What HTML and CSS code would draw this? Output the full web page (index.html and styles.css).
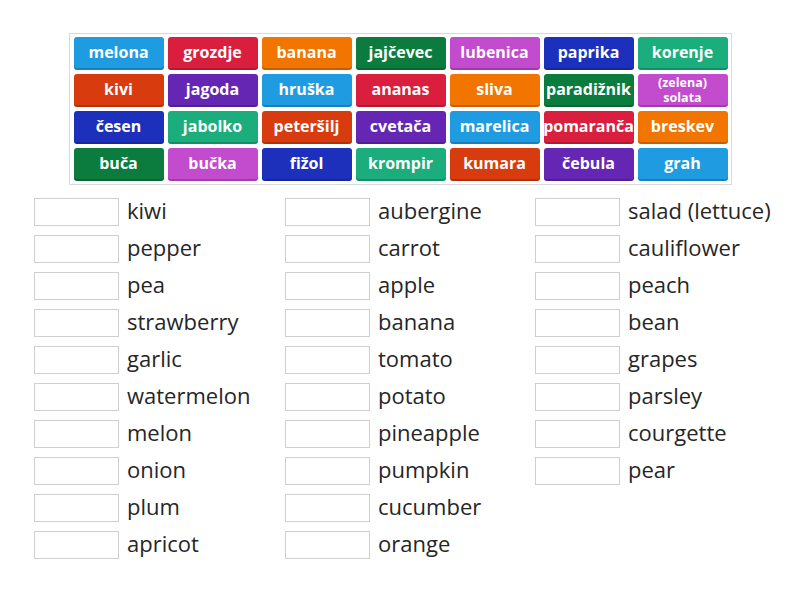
FILE: index.html
```html
<!DOCTYPE html>
<html lang="sl">
<head>
<meta charset="utf-8">
<title>Vegetables and fruit</title>
<link rel="stylesheet" href="styles.css">
</head>
<body>
<div class="page">
  <div class="bank">
    <div class="tile blue">melona</div>
    <div class="tile red">grozdje</div>
    <div class="tile orange">banana</div>
    <div class="tile green">jajčevec</div>
    <div class="tile pink">lubenica</div>
    <div class="tile navy">paprika</div>
    <div class="tile teal">korenje</div>

    <div class="tile rust">kivi</div>
    <div class="tile purple">jagoda</div>
    <div class="tile blue">hruška</div>
    <div class="tile red">ananas</div>
    <div class="tile orange">sliva</div>
    <div class="tile green">paradižnik</div>
    <div class="tile pink small"><span>(zelena)</span><span>solata</span></div>

    <div class="tile navy">česen</div>
    <div class="tile teal">jabolko</div>
    <div class="tile rust">peteršilj</div>
    <div class="tile purple">cvetača</div>
    <div class="tile blue">marelica</div>
    <div class="tile red">pomaranča</div>
    <div class="tile orange">breskev</div>

    <div class="tile green">buča</div>
    <div class="tile pink">bučka</div>
    <div class="tile navy">fižol</div>
    <div class="tile teal">krompir</div>
    <div class="tile rust">kumara</div>
    <div class="tile purple">čebula</div>
    <div class="tile blue">grah</div>
  </div>

  <div class="answers">
    <div class="col">
      <div class="row"><span class="slot"></span><span class="word">kiwi</span></div>
      <div class="row"><span class="slot"></span><span class="word">pepper</span></div>
      <div class="row"><span class="slot"></span><span class="word">pea</span></div>
      <div class="row"><span class="slot"></span><span class="word">strawberry</span></div>
      <div class="row"><span class="slot"></span><span class="word">garlic</span></div>
      <div class="row"><span class="slot"></span><span class="word">watermelon</span></div>
      <div class="row"><span class="slot"></span><span class="word">melon</span></div>
      <div class="row"><span class="slot"></span><span class="word">onion</span></div>
      <div class="row"><span class="slot"></span><span class="word">plum</span></div>
      <div class="row"><span class="slot"></span><span class="word">apricot</span></div>
    </div>
    <div class="col">
      <div class="row"><span class="slot"></span><span class="word">aubergine</span></div>
      <div class="row"><span class="slot"></span><span class="word">carrot</span></div>
      <div class="row"><span class="slot"></span><span class="word">apple</span></div>
      <div class="row"><span class="slot"></span><span class="word">banana</span></div>
      <div class="row"><span class="slot"></span><span class="word">tomato</span></div>
      <div class="row"><span class="slot"></span><span class="word">potato</span></div>
      <div class="row"><span class="slot"></span><span class="word">pineapple</span></div>
      <div class="row"><span class="slot"></span><span class="word">pumpkin</span></div>
      <div class="row"><span class="slot"></span><span class="word">cucumber</span></div>
      <div class="row"><span class="slot"></span><span class="word">orange</span></div>
    </div>
    <div class="col">
      <div class="row"><span class="slot"></span><span class="word">salad (lettuce)</span></div>
      <div class="row"><span class="slot"></span><span class="word">cauliflower</span></div>
      <div class="row"><span class="slot"></span><span class="word">peach</span></div>
      <div class="row"><span class="slot"></span><span class="word">bean</span></div>
      <div class="row"><span class="slot"></span><span class="word">grapes</span></div>
      <div class="row"><span class="slot"></span><span class="word">parsley</span></div>
      <div class="row"><span class="slot"></span><span class="word">courgette</span></div>
      <div class="row"><span class="slot"></span><span class="word">pear</span></div>
    </div>
  </div>
</div>
</body>
</html>
```

FILE: styles.css
```css
* {
  box-sizing: border-box;
}

html, body {
  margin: 0;
  background: #ffffff;
}

body {
  font-family: "Open Sans", "Liberation Sans", sans-serif;
  width: 800px;
  height: 600px;
  overflow: hidden;
}

.page {
  padding-top: 33px;
  display: flex;
  flex-direction: column;
  align-items: center;
}

.bank {
  width: 663px;
  border: 1px solid #d9d9d9;
  padding: 3px 3px 3px 4px;
  display: grid;
  grid-template-columns: repeat(7, 90px);
  grid-auto-rows: 33px;
  gap: 4px;
  justify-content: center;
}

.tile {
  border-radius: 3px;
  color: #ffffff;
  font-weight: 700;
  font-size: 16px;
  line-height: 18px;
  padding-bottom: 3px;
  display: flex;
  align-items: center;
  justify-content: center;
  text-align: center;
  white-space: nowrap;
  box-shadow: inset 0 -2px 0 rgba(0, 0, 0, 0.18);
}

.tile.small {
  flex-direction: column;
  font-size: 12.5px;
  line-height: 15px;
  padding-bottom: 2px;
}

.blue   { background: #1f9ce1; }
.red    { background: #da1f3e; }
.orange { background: #f27500; }
.green  { background: #0b7c3e; }
.pink   { background: #c34bcd; }
.navy   { background: #1c30bb; }
.teal   { background: #1bad7c; }
.rust   { background: #d83c0e; }
.purple { background: #6526b4; }

.answers {
  align-self: flex-start;
  margin-top: 13px;
  margin-left: 34px;
  display: grid;
  grid-template-columns: 251px 250px 250px;
  align-items: start;
}

.col {
  display: flex;
  flex-direction: column;
  gap: 9px;
}

.row {
  display: flex;
  align-items: center;
  height: 28px;
}

.slot {
  width: 85px;
  height: 28px;
  border: 1px solid #cfcfcf;
  background: #ffffff;
  flex: none;
}

.word {
  margin-left: 8px;
  font-size: 22px;
  line-height: 28px;
  color: #262626;
  white-space: nowrap;
  padding-bottom: 5px;
}
```
